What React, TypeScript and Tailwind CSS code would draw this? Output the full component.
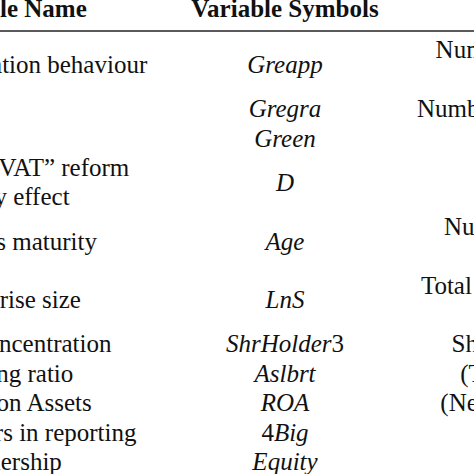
import React from "react";

type Row = {
  name: React.ReactNode;
  symbol: React.ReactNode;
  definition: React.ReactNode;
};

const rows: Row[] = [
  {
    name: "Green innovation behaviour",
    symbol: <i>Greapp</i>,
    definition: (
      <>
        Number of green invention patent
        <br />
        applications
      </>
    ),
  },
  {
    name: "",
    symbol: (
      <>
        <i>Gregra</i>
        <br />
        <i>Green</i>
      </>
    ),
    definition: (
      <>
        Number of green patent authorization
        <br />
        (granted patents)
      </>
    ),
  },
  {
    name: (
      <>
        “Excise-to-VAT” reform
        <br />
        policy effect
      </>
    ),
    symbol: <i>D</i>,
    definition: (
      <>
        Dummy variable, 1 after
        <br />
        the reform, otherwise 0
      </>
    ),
  },
  {
    name: "Business maturity",
    symbol: <i>Age</i>,
    definition: (
      <>
        Number of years since founding
        <br />
        (in logarithm)
      </>
    ),
  },
  {
    name: "Enterprise size",
    symbol: <i>LnS</i>,
    definition: (
      <>
        Total assets at the end of each period
        <br />
        (natural logarithm)
      </>
    ),
  },
  {
    name: "Equity concentration",
    symbol: (
      <>
        <i>ShrHolder</i>3
      </>
    ),
    definition: "Shareholding ratio of top three",
  },
  {
    name: "Gearing ratio",
    symbol: <i>Aslbrt</i>,
    definition: "(Total liabilities/Total assets)",
  },
  {
    name: "Return on Assets",
    symbol: <i>ROA</i>,
    definition: "(Net profits/Average total assets)",
  },
  {
    name: "Big4 auditors in reporting",
    symbol: (
      <>
        4<i>Big</i>
      </>
    ),
    definition: "1 if audited by Big 4",
  },
  {
    name: "Ownership",
    symbol: <i>Equity</i>,
    definition: "1 if state-owned, else 0",
  },
];

export default function App() {
  return (
    <div className="w-[474px] h-[474px] overflow-hidden bg-white text-[#111] font-[family-name:'Liberation_Serif',serif] text-[25px] leading-[29.4px]">
      <div className="ml-[-146px] w-[946px] mt-[-6px]">
        {/* header */}
        <div className="grid grid-cols-[306px_250px_390px] font-bold text-center whitespace-nowrap pb-[7px]">
          <div>Variable Name</div>
          <div>Variable Symbols</div>
          <div>Variable Definition</div>
        </div>
        <div className="h-[2px] bg-[#5a5a5a]" />

        {/* body */}
        <div className="pt-[3px]">
          {rows.map((row, i) => (
            <div
              key={i}
              className="grid grid-cols-[306px_250px_390px] items-center text-center whitespace-nowrap"
            >
              <div>{row.name}</div>
              <div>{row.symbol}</div>
              <div>{row.definition}</div>
            </div>
          ))}
        </div>
      </div>
    </div>
  );
}
